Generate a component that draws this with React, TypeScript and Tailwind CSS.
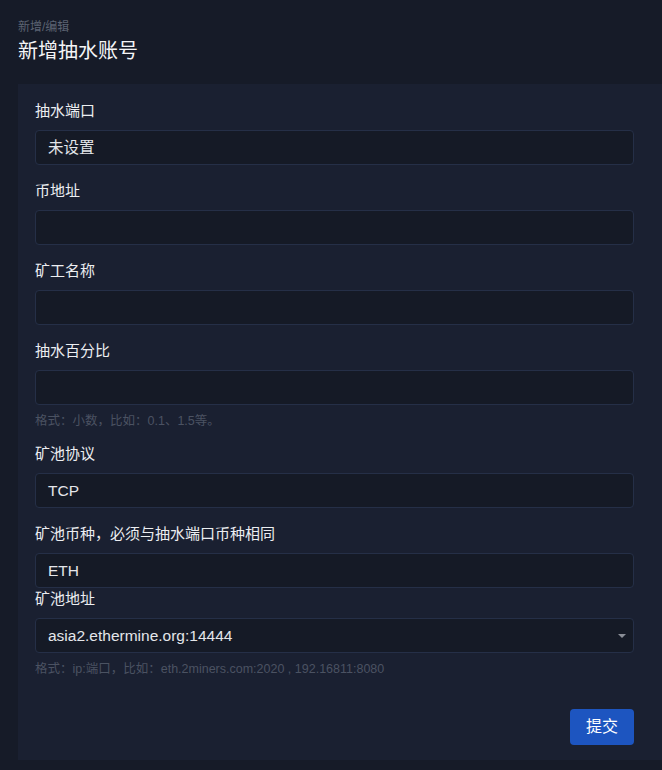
const FONT = { fontFamily: '"Liberation Sans", "Noto Sans CJK SC", sans-serif' };

function Field({
  label,
  value,
  help,
  gap = "mb-[15px]",
  select,
}: {
  label: string;
  value?: string;
  help?: string;
  gap?: string;
  select?: boolean;
}) {
  return (
    <div className={gap}>
      <div className="text-[15px] leading-[22px] text-[#eceef1] mb-2">{label}</div>
      <div className="relative h-[35px] rounded-[4px] border border-[#252f47] bg-[#151a26] flex items-center px-3 text-[15.5px] text-[#e4e6ea]">
        {value}
        {select && (
          <span className="absolute right-[7px] top-[15px] w-0 h-0 border-l-[4px] border-r-[4px] border-t-[4px] border-l-transparent border-r-transparent border-t-[#8a8e97]" />
        )}
      </div>
      {help && <div className="mt-[7px] text-[12.5px] leading-[18px] text-[#4b5262]">{help}</div>}
    </div>
  );
}

export default function App() {
  return (
    <div className="min-h-[770px] bg-[#161b28]" style={FONT}>
      <div className="pl-[18px] pt-[19px] h-[84px]">
        <div className="text-[12px] leading-[16px] text-[#5c6372]">新增/编辑</div>
        <div className="text-[20px] leading-[30px] mt-[1px] text-[#f4f5f7]">新增抽水账号</div>
      </div>
      <div className="ml-[18px] bg-[#1a2031] pl-[17px] pr-[28px] pt-[16px] pb-[16px] h-[676px]">
        <Field label="抽水端口" value="未设置" />
        <Field label="币地址" />
        <Field label="矿工名称" />
        <Field label="抽水百分比" help="格式：小数，比如：0.1、1.5等。" gap="mb-[13px]" />
        <Field label="矿池协议" value="TCP" />
        <Field label="矿池币种，必须与抽水端口币种相同" value="ETH" gap="" />
        <Field
          label="矿池地址"
          value="asia2.ethermine.org:14444"
          select
          help="格式：ip:端口，比如：eth.2miners.com:2020 , 192.16811:8080"
          gap=""
        />
        <div className="flex justify-end mt-[31px]">
          <button className="h-[36px] w-[64px] rounded-[4px] bg-[#1d55c0] text-white text-[16px]">提交</button>
        </div>
      </div>
    </div>
  );
}
